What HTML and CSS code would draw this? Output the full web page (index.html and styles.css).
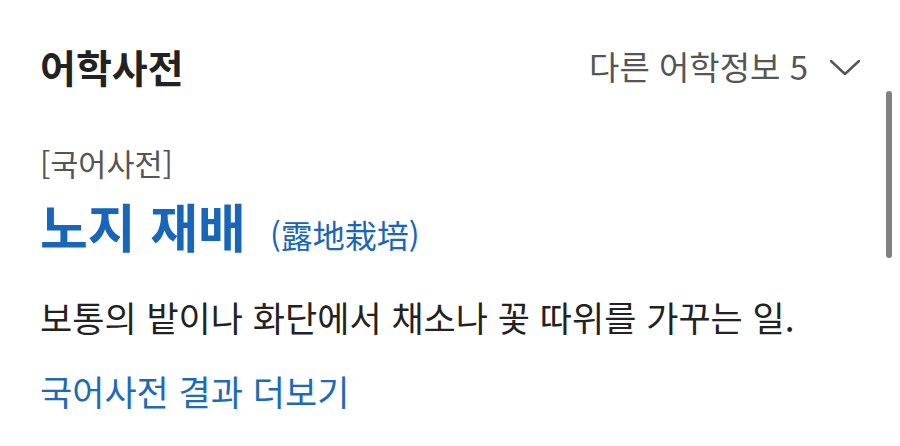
FILE: index.html
```html
<!DOCTYPE html>
<html lang="ko">
<head>
<meta charset="utf-8">
<link rel="stylesheet" href="styles.css">
</head>
<body>
<div class="card">
  <div class="header">
    <h2 class="title">어학사전</h2>
    <div class="more">
      <span class="more-text">다른 어학정보 5</span>
      <svg class="chev" width="32" height="17" viewBox="0 0 32 17"><polyline points="2,2 16,15 30,2" fill="none" stroke="#555" stroke-width="2.4" stroke-linecap="round" stroke-linejoin="round"/></svg>
    </div>
  </div>
  <div class="dict">[국어사전]</div>
  <div class="word"><span class="hw">노지 재배</span><span class="hanja">(露地栽培)</span></div>
  <p class="def">보통의 밭이나 화단에서 채소나 꽃 따위를 가꾸는 일.</p>
  <a class="link">국어사전 결과 더보기</a>
  <div class="scrollbar"></div>
</div>
</body>
</html>
```
FILE: styles.css
```css
html, body { margin: 0; padding: 0; background: #fff; }
body { font-family: "Noto Sans CJK KR", "Noto Sans", sans-serif; width: 900px; height: 446px; overflow: hidden; }
.card { position: relative; padding: 44px 39px 0 40px; height: 446px; box-sizing: border-box; }
.header { display: flex; justify-content: space-between; align-items: center; height: 44px; }
.title { margin: 0; font-size: 39px; line-height: 44px; font-weight: 700; color: #222; }
.more { display: flex; align-items: center; gap: 21px; }
.more-text { font-size: 33px; line-height: 44px; color: #555; }
.chev { display: block; margin-top: 2px; }
.dict { margin-top: 57px; font-size: 30.5px; line-height: 36px; color: #555; }
.word { margin-top: 17px; display: flex; align-items: baseline; gap: 24px; line-height: 56px; }
.hw { font-size: 52px; font-weight: 700; color: #1766ba; }
.hanja { font-size: 32px; color: #1766ba; }
.def { margin: 33px 0 0; font-size: 35px; line-height: 44px; color: #222; }
.link { display: block; margin-top: 30px; font-size: 35px; line-height: 44px; color: #1d6ab8; text-decoration: none; }
.scrollbar { position: absolute; left: 886px; top: 91px; width: 6px; height: 167px; border-radius: 3px; background: #808080; }
```
